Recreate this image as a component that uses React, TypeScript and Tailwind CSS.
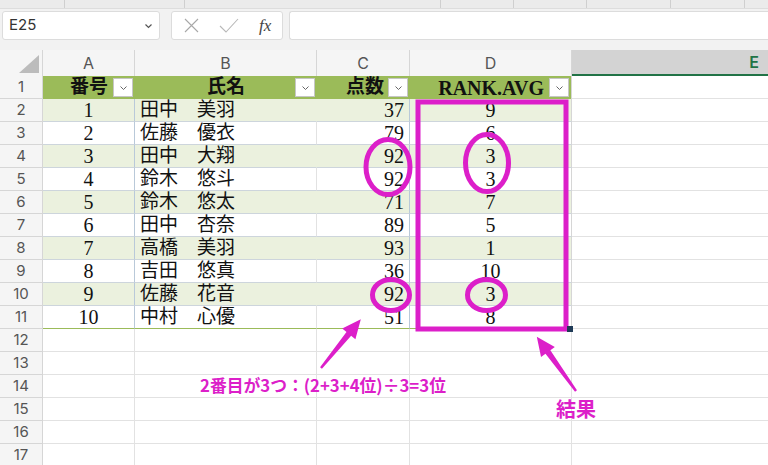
import React from "react";

const MAG = "#dc1fc9";
const SERIF = "font-['Liberation_Serif','Noto_Sans_CJK_JP',serif]";

const data: [number, string, number, number][] = [
  [1, "田中　美羽", 37, 9],
  [2, "佐藤　優衣", 79, 6],
  [3, "田中　大翔", 92, 3],
  [4, "鈴木　悠斗", 92, 3],
  [5, "鈴木　悠太", 71, 7],
  [6, "田中　杏奈", 89, 5],
  [7, "高橋　美羽", 93, 1],
  [8, "吉田　悠真", 36, 10],
  [9, "佐藤　花音", 92, 3],
  [10, "中村　心優", 51, 8],
];

function FilterBtn() {
  return (
    <span className="absolute right-[2px] top-[2px] w-[20px] h-[19px] bg-white border border-[#c6c6c6] flex items-center justify-center">
      <svg width="9" height="6" viewBox="0 0 9 6">
        <path d="M1.5 1.5l3 3 3-3" stroke="#666" strokeWidth="1" fill="none" />
      </svg>
    </span>
  );
}

function RowHead({ n }: { n: number }) {
  return (
    <div className="w-[43px] shrink-0 bg-[#f5f5f5] border-r border-b border-[#d6d6d6] text-center text-[15px] leading-[22px] text-[#555] font-['Inter',sans-serif] font-normal">
      {n}
    </div>
  );
}

export default function App() {
  return (
    <div className="relative w-[768px] h-[465px] overflow-hidden bg-[#f2f2f2] font-['Inter','Noto_Sans_CJK_JP',sans-serif]">
      {/* ribbon leftovers */}
      <div className="h-[9px] bg-[#ebebeb] border-b border-[#dddddd] flex">
        <div className="w-[65px] border-r border-[#cfcfcf]"></div>
        <div className="w-[120px] border-r border-[#cfcfcf]"></div>
        <div className="w-[256px] border-r border-[#cfcfcf]"></div>
        <div className="w-[73px] border-r border-[#cfcfcf]"></div>
        <div className="w-[73px] border-r border-[#cfcfcf]"></div>
        <div className="w-[84px] border-r border-[#cfcfcf]"></div>
        <div className="w-[74px] border-r border-[#cfcfcf]"></div>
      </div>

      {/* formula bar */}
      <div className="flex pt-[2px] pb-[10px] pl-[2px]">
        <div className="w-[158px] h-[29px] bg-white border border-[#dcdcdc] rounded-[3px] flex items-center justify-between pl-[6px] pr-[6px]">
          <span className="text-[15px] text-[#333]">E25</span>
          <svg width="9" height="6" viewBox="0 0 9 6">
            <path d="M1.5 1.5l3 3 3-3" stroke="#555" strokeWidth="1.2" fill="none" />
          </svg>
        </div>
        <div className="ml-[11px] w-[112px] h-[29px] bg-white border border-[#dcdcdc] rounded-[3px] flex items-center pl-[12px] gap-[20px]">
          <svg width="15" height="15" viewBox="0 0 15 15">
            <path d="M1 1l13 13M14 1L1 14" stroke="#a8a8a8" strokeWidth="1.1" fill="none" />
          </svg>
          <svg width="20" height="15" viewBox="0 0 20 15">
            <path d="M1 8l6 6L19 1" stroke="#b8b8b8" strokeWidth="1.1" fill="none" />
          </svg>
          <span className="font-['Liberation_Serif',serif] italic text-[17px] text-[#444] leading-none">fx</span>
        </div>
        <div className="ml-[6px] flex-1 h-[29px] bg-white border-y border-l border-[#dcdcdc] rounded-l-[3px]"></div>
      </div>

      {/* column headers */}
      <div className="flex h-[26px] text-[16px] text-[#555] leading-[26px]">
        <div className="w-[43px] shrink-0 bg-[#f5f5f5] border-r border-[#d6d6d6] flex items-end justify-end pr-[3px] pb-[3px]">
          <svg width="20" height="18" viewBox="0 0 20 18">
            <path d="M20 0V18H0Z" fill="#bcbcbc" />
          </svg>
        </div>
        <div className="w-[92px] shrink-0 bg-[#f5f5f5] border-r border-[#d6d6d6] text-center">A</div>
        <div className="w-[182px] shrink-0 bg-[#f5f5f5] border-r border-[#d6d6d6] text-center">B</div>
        <div className="w-[93px] shrink-0 bg-[#f5f5f5] border-r border-[#d6d6d6] text-center">C</div>
        <div className="w-[162px] shrink-0 bg-[#f5f5f5] border-r border-[#d6d6d6] text-center">D</div>
        <div className="flex-1 bg-[#d3d3d3] border-b-2 border-[#217346] text-right pr-[9px] text-[#217346] font-semibold leading-[24px]">E</div>
      </div>

      {/* row 1: table header */}
      <div className={`flex h-[23px] ${SERIF}`}>
        <RowHead n={1} />
        <div className="relative w-[92px] shrink-0 bg-[#9bbb59] flex items-center justify-center text-[19px] font-bold text-[#111]">
          番号
          <FilterBtn />
        </div>
        <div className="relative w-[182px] shrink-0 bg-[#9bbb59] flex items-center justify-center text-[19px] font-bold text-[#111]">
          氏名
          <FilterBtn />
        </div>
        <div className="relative w-[93px] shrink-0 bg-[#9bbb59] flex items-center justify-end pr-[26px] text-[19px] font-bold text-[#111]">
          点数
          <FilterBtn />
        </div>
        <div className="relative w-[162px] shrink-0 bg-[#9bbb59] border-r border-[#d6d6d6] flex items-center justify-end pr-[27px] text-[20px] font-bold text-[#111]">
          RANK.AVG
          <FilterBtn />
        </div>
        <div className="flex-1 bg-white border-b border-[#e2e2e2]"></div>
      </div>

      {/* data rows */}
      {data.map(([no, name, score, rank], i) => {
        const band = i % 2 === 0;
        const last = i === data.length - 1;
        return (
          <div key={no} className={`flex h-[23px] ${SERIF} text-[#111] leading-[22px]`}>
            <RowHead n={i + 2} />
            <div
              className={`w-[92px] shrink-0 border-r border-b border-r-[#b9c9d9] text-center text-[20px] ${
                band ? "bg-[#ebf1de]" : "bg-white"
              } ${last ? "border-b-[#9bbb59]" : "border-b-[#cdd5dc]"}`}
            >
              {no}
            </div>
            <div
              className={`w-[182px] shrink-0 border-r border-b pl-[5px] text-[19px] ${
                band ? "bg-[#ebf1de] border-r-[#ebf1de]" : "bg-white border-r-[#e2e2e2]"
              } ${last ? "border-b-[#9bbb59]" : "border-b-[#cdd5dc]"}`}
            >
              {name}
            </div>
            <div
              className={`w-[93px] shrink-0 border-r border-b border-r-[#b9c9d9] text-right pr-[5px] text-[20px] ${
                band ? "bg-[#ebf1de]" : "bg-white"
              } ${last ? "border-b-[#9bbb59]" : "border-b-[#cdd5dc]"}`}
            >
              {score}
            </div>
            <div
              className={`w-[162px] shrink-0 border-r border-b border-r-[#d6d6d6] text-center text-[20px] ${
                band ? "bg-[#ebf1de]" : "bg-white"
              } ${last ? "border-b-[#9bbb59]" : "border-b-[#cdd5dc]"}`}
            >
              {rank}
            </div>
            <div className="flex-1 bg-white border-b border-[#e2e2e2]"></div>
          </div>
        );
      })}

      {/* empty rows */}
      {[12, 13, 14, 15, 16, 17].map((n) => (
        <div key={n} className="flex h-[23px]">
          <RowHead n={n} />
          <div className="w-[92px] shrink-0 bg-white border-r border-b border-[#e2e2e2]"></div>
          <div className="w-[182px] shrink-0 bg-white border-r border-b border-[#e2e2e2]"></div>
          <div className="w-[93px] shrink-0 bg-white border-r border-b border-[#e2e2e2]"></div>
          <div className="w-[162px] shrink-0 bg-white border-r border-b border-[#e2e2e2]"></div>
          <div className="flex-1 bg-white border-b border-[#e2e2e2]"></div>
        </div>
      ))}

      {/* annotations drawn over the sheet */}
      <svg className="absolute left-0 top-0 pointer-events-none" width="768" height="465" viewBox="0 0 768 465">
        <g fill="none" stroke={MAG} strokeWidth="5">
          <rect x="418" y="102" width="148" height="227" />
          <ellipse cx="388" cy="167" rx="22" ry="27.5" />
          <ellipse cx="487" cy="163" rx="21.5" ry="28.5" />
          <ellipse cx="391" cy="295" rx="18.5" ry="15.5" />
          <ellipse cx="486.5" cy="295" rx="19" ry="15.5" />
        </g>
        <rect x="567" y="326" width="6" height="6" fill="#1f3b57" />
        <g fill={MAG}>
          <g transform="translate(321 368) rotate(-50.8)">
            <polygon points="0,-1.2 44,-3 44,-8.5 63,0 44,8.5 44,3 0,1.2" />
          </g>
          <g transform="translate(576 391) rotate(-125.8)">
            <polygon points="0,-1.2 48,-3 48,-8.5 67,0 48,8.5 48,3 0,1.2" />
          </g>
        </g>
      </svg>
      <span className="absolute left-[200px] top-[375px] text-[16.8px] font-bold leading-[20px] whitespace-nowrap text-[#dc1fc9] font-['Noto_Sans_CJK_JP',sans-serif]">
        2番目が3つ：(2+3+4位)÷3=3位
      </span>
      <span className="absolute left-[556px] top-[397px] text-[20px] font-bold leading-[24px] text-[#dc1fc9] font-['Noto_Sans_CJK_JP',sans-serif]">
        結果
      </span>
    </div>
  );
}
